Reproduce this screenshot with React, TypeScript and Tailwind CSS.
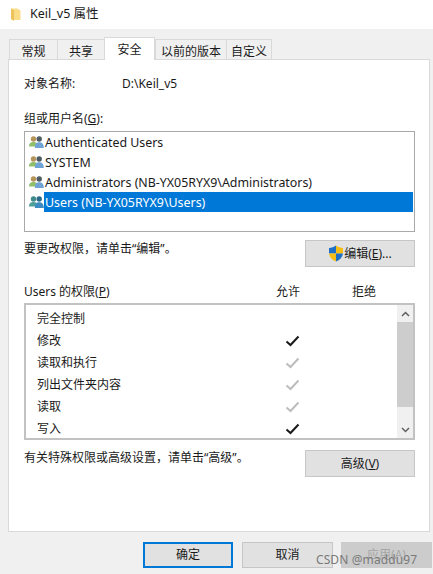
const FONT = 'font-["Noto_Sans","Noto_Sans_CJK_SC",sans-serif]';

function GroupIcon({ selected }: { selected?: boolean }) {
  const a = selected ? "#4f9f9c" : "#8fbf6a";
  const b = selected ? "#3d8bc0" : "#6fa3d6";
  const h = selected ? "#3f8a8a" : "#b5945c";
  const h2 = selected ? "#2c6a8a" : "#4d5a60";
  return (
    <svg width="15" height="12" viewBox="0 0 15 12" className="shrink-0">
      <circle cx="4.5" cy="3" r="2.7" fill={h} />
      <path d="M0 10.5 C0 7 2 6 4.5 6 C7 6 8.5 7 8.5 10.5 Z" fill={a} />
      <circle cx="10.2" cy="3" r="2.7" fill={h2} />
      <path d="M5.8 12 C5.8 7.5 7.8 6.3 10.2 6.3 C12.6 6.3 14.8 7.5 14.8 12 Z" fill={b} />
    </svg>
  );
}

function Shield() {
  return (
    <svg width="16" height="17" viewBox="0 0 16 17" className="shrink-0">
      <path d="M8 0.5 C10 2 12.5 2.8 15 3 V8.5 H8 Z" fill="#f6bd16" />
      <path d="M8 0.5 C6 2 3.5 2.8 1 3 V8.5 H8 Z" fill="#1f6fc4" />
      <path d="M8 8.5 H15 C14.6 12 12 15 8 16.5 Z" fill="#1f6fc4" />
      <path d="M1 8.5 H8 V16.5 C4 15 1.4 12 1 8.5 Z" fill="#f6bd16" />
    </svg>
  );
}

function Check({ on }: { on: boolean }) {
  return (
    <svg width="15" height="12" viewBox="0 0 15 12">
      <path d="M1.5 6.5 L5.5 10 L13.5 1.5" fill="none" stroke={on ? "#1a1a1a" : "#bdbdbd"} strokeWidth="2" />
    </svg>
  );
}

function Chevron({ up }: { up?: boolean }) {
  return (
    <svg width="9" height="6" viewBox="0 0 9 6">
      <path d={up ? "M1 5 L4.5 1.5 L8 5" : "M1 1 L4.5 4.5 L8 1"} fill="none" stroke="#606060" strokeWidth="1.5" />
    </svg>
  );
}

function Btn({ children, className = "" }: { children: React.ReactNode; className?: string }) {
  return (
    <div className={`flex items-center justify-center text-[12px] ${className}`}>
      {children}
    </div>
  );
}

const tabs = [
  { t: "常规", w: "w-[48px]" },
  { t: "共享", w: "w-[47px]" },
  { t: "安全", w: "w-[51px]", active: true },
  { t: "以前的版本", w: "w-[71px]" },
  { t: "自定义", w: "w-[46px]" },
];

const users = [
  { t: "Authenticated Users" },
  { t: "SYSTEM" },
  { t: "Administrators (NB-YX05RYX9\\Administrators)" },
  { t: "Users (NB-YX05RYX9\\Users)", selected: true },
];

const perms: [string, boolean | null][] = [
  ["完全控制", null],
  ["修改", true],
  ["读取和执行", false],
  ["列出文件夹内容", false],
  ["读取", false],
  ["写入", true],
];

const grayBtn = "bg-[#e1e1e1] border border-[#c6c6c6] text-[#1a1a1a]";

export default function App() {
  return (
    <div className={`relative w-[433px] h-[574px] overflow-hidden bg-[#f0f0f0] text-[12px] text-[#1a1a1a] ${FONT}`}>
      <div className="h-[29px] bg-white flex items-start pl-[11px] gap-[9px]">
        <svg width="10" height="13" viewBox="0 0 10 13" className="mt-[8px] shrink-0">
          <path d="M0 0.5 H6 L9.5 2.5 V12 H2 L0 11 Z" fill="#f9dc85" />
          <path d="M0 0.5 L3 2.5 V13 L0 11 Z" fill="#eec25a" />
        </svg>
        <span className="text-[12.5px] leading-[28px]">Keil_v5 属性</span>
      </div>

      <div className="flex h-[22px] mt-[8px] pl-[9px] items-end relative z-10">
        {tabs.map((x) =>
          x.active ? (
            <div key={x.t} className={`${x.w} h-[23px] -mb-px bg-white border border-[#d9d9d9] border-b-0 text-center leading-[24px]`}>{x.t}</div>
          ) : (
            <div key={x.t} className={`${x.w} h-[20px] bg-[#f0f0f0] border border-[#d9d9d9] border-b-0 border-r-0 last:border-r text-center leading-[24px]`}>{x.t}</div>
          )
        )}
      </div>

      <div className="ml-2 w-[422px] h-[473px] bg-white border border-[#d9d9d9] pl-[15px] flex flex-col">
        <div className="flex mt-[15px] h-[18px] leading-[18px]">
          <span className="w-[98px]">对象名称:</span>
          <span>D:\Keil_v5</span>
        </div>

        <div className="mt-[17px] h-[18px] leading-[18px]">组或用户名(<span className="underline">G</span>):</div>
        <div className="mt-[3px] w-[391px] h-[101px] border border-[#a9a9a9] pl-[4px] pr-[1px]">
          {users.map((u) => (
            <div key={u.t} className="flex items-center h-[20px]">
              <GroupIcon selected={u.selected} />
              <span className={`h-[20px] leading-[21px] pl-[1px] text-[12.4px] ${u.selected ? "flex-1 bg-[#0078d7] text-white" : ""}`}>{u.t}</span>
            </div>
          ))}
        </div>

        <div className="flex mt-[8px] h-[27px] w-[391px] justify-between">
          <span className="leading-[17px]">要更改权限{"\uFF0C"}请单击“编辑”。</span>
          <Btn className={`w-[110px] h-[27px] ${grayBtn}`}><Shield />编辑(<span className="underline">E</span>)...</Btn>
        </div>

        <div className="flex mt-[16px] h-[18px] leading-[18px]">
          <span className="w-[252px]">Users 的权限(<span className="underline">P</span>)</span>
          <span className="w-[76px]">允许</span>
          <span>拒绝</span>
        </div>

        <div className="mt-[2px] w-[391px] h-[137px] border-2 border-[#c2c2c2] flex">
          <div className="flex-1 pt-[3px]">
            {perms.map(([t, v]) => (
              <div key={t} className="flex items-center h-[22px]">
                <span className="w-[259px] pl-[11px]">{t}</span>
                {v !== null && <Check on={v} />}
              </div>
            ))}
          </div>
          <div className="w-[16px] bg-[#f0f0f0] flex flex-col items-center">
            <div className="h-[17px] flex items-center justify-center"><Chevron up /></div>
            <div className="w-full h-[85px] bg-[#cdcdcd]" />
            <div className="flex-1" />
            <div className="h-[17px] flex items-center justify-center"><Chevron /></div>
          </div>
        </div>

        <div className="flex mt-[10px] h-[27px] w-[391px] justify-between">
          <span className="leading-[16px]">有关特殊权限或高级设置{"\uFF0C"}请单击“高级”。</span>
          <Btn className={`w-[110px] h-[27px] ${grayBtn}`}>高级(<span className="underline">V</span>)</Btn>
        </div>
      </div>

      <div className="flex mt-[10px] pl-[143px]">
        <Btn className="w-[90px] h-[26px] bg-[#e1e1e1] border-2 border-[#0078d7] text-[#1a1a1a]">确定</Btn>
        <Btn className={`ml-[9px] w-[91px] h-[26px] ${grayBtn}`}>取消</Btn>
        <Btn className="ml-[8px] w-[91px] h-[26px] bg-[#cccccc] text-[#a6a6a6]">应用(A)</Btn>
      </div>

      <div className="absolute left-[316px] top-[552px] text-[12px] leading-[16px] tracking-[0.1px] text-[#7a7a7a]">CSDN @maddu97</div>
    </div>
  );
}
